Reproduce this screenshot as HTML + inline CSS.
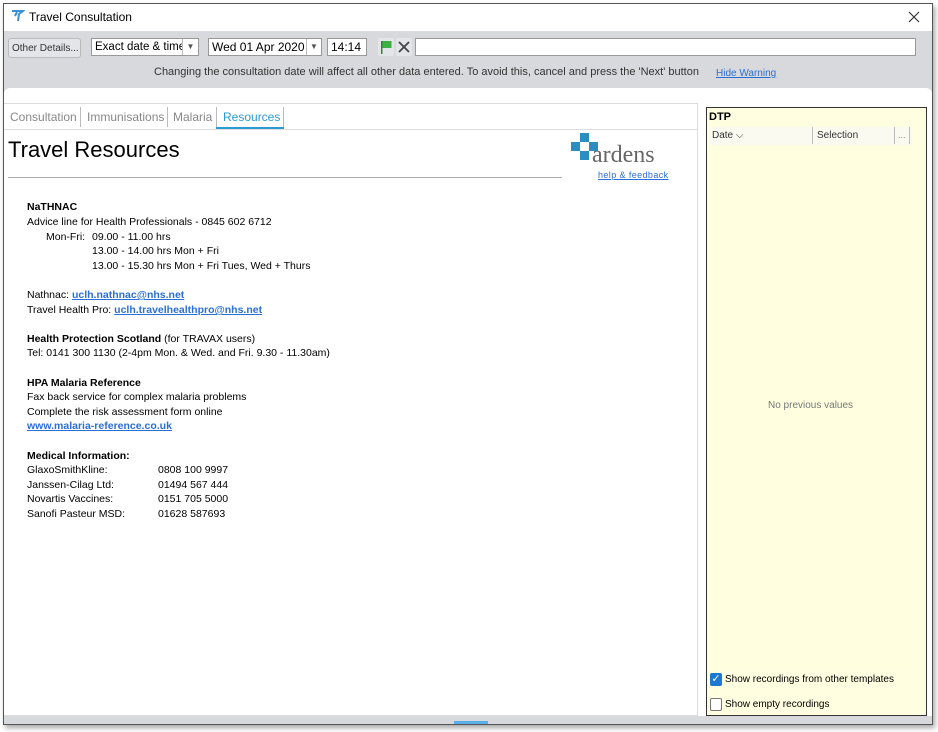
<!DOCTYPE html>
<html><head><meta charset="utf-8"><style>
*{margin:0;padding:0;box-sizing:border-box}
body{width:938px;height:732px;background:#fff;font-family:"Liberation Sans",sans-serif;position:relative;overflow:hidden;color:#000}
.a{position:absolute;white-space:nowrap}
.t{font-size:10.5px;letter-spacing:0;line-height:14px}
.b{font-weight:bold}
a{color:#2a6fd6;font-weight:bold;text-decoration:underline}
</style></head><body>
<div class="a" style="left:3px;top:3px;width:930px;height:722px;border:1px solid #555;background:#d8d9dc;box-shadow:2px 3px 5px rgba(0,0,0,.35)"></div>
<div class="a" style="left:4px;top:4px;width:928px;height:27px;background:#fff"></div>
<svg class="a" style="left:11px;top:9px" width="14" height="14"><path d="M1 2 L12 2 L8 5 L7 12 M6 3 L4 7" stroke="#3a8fd6" stroke-width="2" fill="none"/></svg>
<div class="a" style="left:29px;top:10px;font-size:12px">Travel Consultation</div>
<svg class="a" style="left:908px;top:11px" width="12" height="12"><path d="M1 1 L11 11 M11 1 L1 11" stroke="#333" stroke-width="1.2"/></svg>
<div class="a" style="left:8px;top:38px;width:73px;height:20px;border:1px solid #bbb;border-radius:3px;background:#e4e5e8;font-size:10px;padding:4px 3px;color:#333">Other Details...</div>
<div class="a" style="left:91px;top:38px;width:108px;height:18px;border:1px solid #999;background:#fff;font-size:11.5px;padding:2px 3px">Exact date &amp; time</div>
<div class="a" style="left:182px;top:39px;width:16px;height:16px;border-left:1px solid #bbb;background:#fff;font-size:8px;text-align:center;line-height:16px;color:#555">▼</div>
<div class="a" style="left:208px;top:38px;width:114px;height:18px;border:1px solid #999;background:#fff;font-size:12px;padding:1px 3px">Wed 01 Apr 2020</div>
<div class="a" style="left:306px;top:39px;width:15px;height:16px;border-left:1px solid #bbb;background:#fff;font-size:8px;text-align:center;line-height:16px;color:#555">▼</div>
<div class="a" style="left:327px;top:38px;width:40px;height:18px;border:1px solid #999;background:#fff;font-size:12px;padding:1px 3px">14:14</div>
<svg class="a" style="left:378px;top:38px" width="16" height="18"><rect x="0" y="0" width="16" height="18" fill="#e4e5e8" rx="2"/><rect x="3" y="3" width="1.5" height="13" fill="#2a8a2a"/><rect x="4.5" y="3" width="9" height="7" fill="#3cb043"/></svg>
<svg class="a" style="left:396px;top:38px" width="16" height="18"><rect x="0" y="0" width="16" height="18" fill="#e4e5e8" rx="2"/><path d="M3 4 L13 14 M13 4 L3 14" stroke="#444" stroke-width="1.8"/></svg>
<div class="a" style="left:415px;top:38px;width:501px;height:18px;border:1px solid #999;background:#fff"></div>
<div class="a" style="left:154px;top:66px;font-size:11px;color:#333">Changing the consultation date will affect all other data entered. To avoid this, cancel and press the 'Next' button</div>
<div class="a" style="left:716px;top:68px;font-size:10px;color:#2a6fd6;text-decoration:underline">Hide Warning</div>
<div class="a" style="left:4px;top:88px;width:928px;height:628px;background:#fff;border-radius:6px 6px 0 0"></div>
<div class="a" style="left:4px;top:103px;width:694px;height:613px;border:1px solid #ddd;border-left:none"></div>
<div class="a" style="left:10px;top:110px;font-size:12px;color:#888">Consultation</div>
<div class="a" style="left:80px;top:107px;height:20px;border-left:1px solid #bbb"></div>
<div class="a" style="left:87px;top:110px;font-size:12px;color:#888">Immunisations</div>
<div class="a" style="left:167px;top:107px;height:20px;border-left:1px solid #bbb"></div>
<div class="a" style="left:173px;top:110px;font-size:12px;color:#888">Malaria</div>
<div class="a" style="left:216px;top:107px;height:20px;border-left:1px solid #bbb"></div>
<div class="a" style="left:223px;top:110px;font-size:12px;color:#2a9ad6">Resources</div>
<div class="a" style="left:283px;top:107px;height:20px;border-left:1px solid #bbb"></div>
<div class="a" style="left:216px;top:127px;width:68px;height:2px;background:#2a9ad6"></div>
<div class="a" style="left:4px;top:129px;width:694px;border-top:1px solid #ddd"></div>
<div class="a" style="left:8px;top:137px;font-size:22px">Travel Resources</div>
<div class="a" style="left:8px;top:177px;width:554px;border-top:1px solid #aaa"></div>
<svg class="a" style="left:570px;top:133px" width="30" height="28"><rect x="10" y="0" width="9" height="9" fill="#2a8fc0"/><rect x="1" y="9" width="9" height="9" fill="#2a8fc0"/><rect x="19" y="9" width="9" height="9" fill="#2a8fc0"/><rect x="10" y="18" width="9" height="9" fill="#2a8fc0"/></svg>
<div class="a" style="left:592px;top:142px;font-size:24px;font-family:'Liberation Serif',serif;color:#666">ardens</div>
<div class="a" style="left:598px;top:170px;font-size:9px;color:#2a6fd6;text-decoration:underline;letter-spacing:.4px">help &amp; feedback</div>
<div class="a t b" style="left:27px;top:200px">NaTHNAC</div>
<div class="a t" style="left:27px;top:215px">Advice line for Health Professionals - 0845 602 6712</div>
<div class="a t" style="left:46px;top:230px">Mon-Fri:</div>
<div class="a t" style="left:92px;top:230px">09.00 - 11.00 hrs</div>
<div class="a t" style="left:92px;top:244px">13.00 - 14.00 hrs Mon + Fri</div>
<div class="a t" style="left:92px;top:259px">13.00 - 15.30 hrs Mon + Fri Tues, Wed + Thurs</div>
<div class="a t" style="left:27px;top:288px">Nathnac: <a>uclh.nathnac@nhs.net</a></div>
<div class="a t" style="left:27px;top:303px">Travel Health Pro: <a>uclh.travelhealthpro@nhs.net</a></div>
<div class="a t" style="left:27px;top:332px"><span class="b">Health Protection Scotland</span> (for TRAVAX users)</div>
<div class="a t" style="left:27px;top:346px">Tel: 0141 300 1130 (2-4pm Mon. &amp; Wed. and Fri. 9.30 - 11.30am)</div>
<div class="a t b" style="left:27px;top:376px">HPA Malaria Reference</div>
<div class="a t" style="left:27px;top:390px">Fax back service for complex malaria problems</div>
<div class="a t" style="left:27px;top:405px">Complete the risk assessment form online</div>
<div class="a t" style="left:27px;top:419px"><a>www.malaria-reference.co.uk</a></div>
<div class="a t b" style="left:27px;top:449px">Medical Information:</div>
<div class="a t" style="left:27px;top:463px">GlaxoSmithKline:</div><div class="a t" style="left:158px;top:463px">0808 100 9997</div>
<div class="a t" style="left:27px;top:478px">Janssen-Cilag Ltd:</div><div class="a t" style="left:158px;top:478px">01494 567 444</div>
<div class="a t" style="left:27px;top:492px">Novartis Vaccines:</div><div class="a t" style="left:158px;top:492px">0151 705 5000</div>
<div class="a t" style="left:27px;top:507px">Sanofi Pasteur MSD:</div><div class="a t" style="left:158px;top:507px">01628 587693</div>
<div class="a" style="left:706px;top:107px;width:221px;height:609px;border:1px solid #333;background:#fffee0"></div>
<div class="a b" style="left:709px;top:111px;font-size:11px">DTP</div>
<div class="a" style="left:709px;top:127px;width:203px;height:18px;background:#fafaf0"></div>
<div class="a" style="left:712px;top:130px;font-size:10px;color:#333">Date ⌵</div>
<div class="a" style="left:812px;top:127px;height:17px;border-left:1px solid #bbb"></div>
<div class="a" style="left:817px;top:130px;font-size:10px;color:#333">Selection</div>
<div class="a" style="left:894px;top:127px;height:17px;border-left:1px solid #bbb"></div>
<div class="a" style="left:898px;top:130px;font-size:9px;color:#888">...</div>
<div class="a" style="left:909px;top:127px;height:17px;border-left:1px solid #bbb"></div>
<div class="a" style="left:709px;top:145px;width:203px;height:522px;background:#ffffe0"></div>
<div class="a" style="left:768px;top:400px;font-size:10px;color:#777">No previous values</div>
<div class="a" style="left:710px;top:673px;width:12px;height:13px;background:#1e78d0;border-radius:2px;color:#fff;font-size:11px;line-height:13px;text-align:center">✓</div>
<div class="a" style="left:725px;top:674px;font-size:10px">Show recordings from other templates</div>
<div class="a" style="left:710px;top:698px;width:12px;height:13px;border:1px solid #777;border-radius:2px;background:#fff"></div>
<div class="a" style="left:725px;top:699px;font-size:10px">Show empty recordings</div>
<div class="a" style="left:454px;top:721px;width:34px;height:3px;background:#5ab0e8"></div>
</body></html>
